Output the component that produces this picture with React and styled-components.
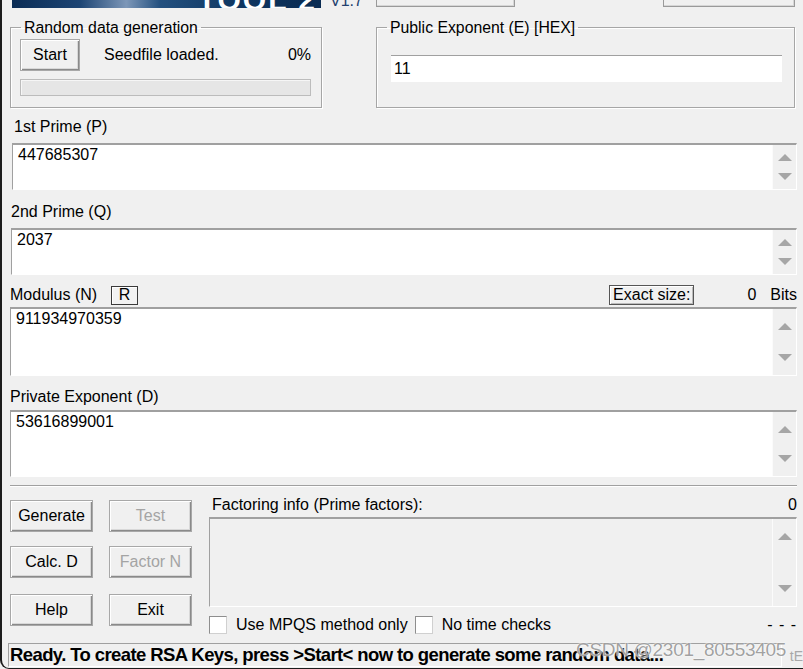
import React from 'react';
import styled, { createGlobalStyle } from 'styled-components';

const GlobalStyle = createGlobalStyle`
  html, body { margin: 0; padding: 0; background: #f0f0f0; }
  * { box-sizing: border-box; }
`;

const Window = styled.div`
  position: relative;
  width: 803px; height: 669px; overflow: hidden;
  background: #f0f0f0;
  border-left: 2px solid #1c1c1c;
  border-bottom: 1px solid #1c1c1c;
  border-bottom-left-radius: 9px;
  font-family: "Liberation Sans", Arial, sans-serif;
  font-size: 16px; color: #000;
  display: flex; flex-direction: column;
`;

const TopStrip = styled.div`
  height: 8px; display: flex; align-items: flex-end; overflow: hidden;
`;

const Banner = styled.div`
  margin-left: 10px; width: 309px; height: 8px; overflow: hidden;
  display: flex; justify-content: flex-end; align-items: flex-end;
  padding-right: 4px;
  background: linear-gradient(90deg, #0b2c55 0%, #1d4574 22%, #7d97b8 37%, #23507f 48%, #0e355f 75%, #0a2b52 100%);
`;

const BannerTitle = styled.span`
  font: bold 30px/24px "Liberation Sans", Arial, sans-serif;
  color: #fff; letter-spacing: 2px; margin-bottom: -4px;
`;

const Version = styled.span`
  margin-left: 9px; font-size: 16px; line-height: 16px; color: #23416e; margin-bottom: -1px;
`;

const TopButton = styled.div`
  height: 7px; width: ${p => p.w}px; margin-left: ${p => p.ml}px; align-self: flex-start;
  border: 1px solid #9a9a9a; border-top: none;
  box-shadow: inset -1px -1px #d6d6d6;
`;

const GroupRow = styled.div`
  display: flex; margin-top: 11px; padding-left: 8px;
`;

const Group = styled.fieldset`
  margin: 0 0 0 ${p => p.ml || 0}px; padding: 0;
  width: ${p => p.w}px; height: 89px;
  border: 1px solid #a6a6a6;
  box-shadow: inset 1px 1px #fff, 1px 1px #fff;
  min-width: 0;
  legend {
    margin-left: 10px; padding: 0 3px; line-height: 17px; font-size: 15.8px;
  }
`;

const GroupBody = styled.div`
  padding-left: ${p => p.pl}px; padding-right: 10px;
`;

const StartRow = styled.div`
  display: flex; align-items: center; margin-top: 3px;
`;

const WinButton = styled.div`
  width: ${p => p.w || 83}px; height: ${p => p.h || 32}px;
  display: flex; align-items: center; justify-content: center;
  background: #f0f0f0;
  border: 1px solid #a8a8a8;
  box-shadow: inset 1px 1px #fff, inset -1px -1px #8a8a8a, inset -2px -2px #d8d8d8;
  color: ${p => (p.disabled ? '#a4a4a4' : '#000')};
  font-size: 16px;
`;

const Status = styled.span`
  margin-left: ${p => p.ml || 0}px;
  ${p => p.grow && 'flex: 1;'}
`;

const Progress = styled.div`
  margin-top: 8px; width: 291px; height: 17px;
  border: 1px solid #bcbcbc; background: #e6e6e6;
  box-shadow: inset 1px 1px #f6f6f6;
`;

const HexInput = styled.div`
  margin-top: 19px; width: 391px; height: 27px;
  background: #fff; border-top: 1px solid #a0a0a0;
  padding: 4px 3px 0; font-size: 16px; line-height: 18px; color: #000;
`;

const Field = styled.div`
  margin-top: ${p => p.mt}px; padding-left: ${p => p.pl}px; padding-right: 6px;
`;

const FieldHead = styled.div`
  display: flex; align-items: center; height: 18px; margin-bottom: ${p => p.mb || 7}px;
  padding-left: ${p => p.lpl || 0}px;
`;

const Label = styled.span`
  line-height: 18px; font-size: 16px;
`;

const SmallButton = styled.div`
  margin-left: 14px; width: 27px; height: 19px;
  display: flex; align-items: center; justify-content: center;
  border: 1px solid #3a3a3a; box-shadow: inset 1px 1px #fff; background: #f2f2f2;
`;

const ExactBox = styled.div`
  margin-left: auto; height: 20px; padding: 0 3px;
  display: flex; align-items: center;
  border: 1px solid #555; box-shadow: inset 1px 1px #fff, inset -1px -1px #bbb;
`;

const Bits = styled.span`
  margin-left: ${p => p.ml}px;
`;

const TextBox = styled.div`
  display: flex; height: ${p => p.h}px;
  background: ${p => (p.disabled ? '#f0f0f0' : '#fff')};
  border-top: 2px solid #a0a0a0; border-left: 1px solid #a0a0a0;
  border-right: 1px solid #fff; border-bottom: 1px solid #fff;
`;

const TextContent = styled.div`
  flex: 1; padding: 1px 5px; font-size: 16px; line-height: 18px;
`;

const ScrollBar = styled.div`
  width: 24px; background: #f0f0f0;
  border-left: 1px solid #fbfbfb;
  display: flex; flex-direction: column; justify-content: space-between; align-items: center;
  padding: ${p => p.pad || 9}px 0;
`;

const Arrow = styled.span`
  width: 0; height: 0;
  border-left: 7px solid transparent; border-right: 7px solid transparent;
  ${p => (p.down ? 'border-top: 7px solid #a6a6a6;' : 'border-bottom: 7px solid #a6a6a6;')}
`;

const Separator = styled.div`
  margin: 8px 6px 0 8px; height: 2px;
  border-top: 1px solid #a0a0a0; border-bottom: 1px solid #fff;
`;

const Bottom = styled.div`
  display: flex; margin-top: 13px; padding-left: 8px; padding-right: 6px;
`;

const ButtonGrid = styled.div`
  display: grid; grid-template-columns: 83px 83px; column-gap: 16px; row-gap: 14px;
  align-content: start;
  & > :nth-child(n + 5) { margin-top: 2px; }
`;

const FactorPanel = styled.div`
  flex: 1; margin-left: 17px; margin-top: -4px; display: flex; flex-direction: column;
`;

const FactorHead = styled.div`
  height: 21px; display: flex; justify-content: space-between; padding: 0 0 0 3px; line-height: 18px;
`;

const CheckRow = styled.div`
  display: flex; align-items: center; margin-top: 9px; height: 18px;
`;

const CheckBox = styled.span`
  width: 18px; height: 18px; background: #fff;
  border: 1px solid #8e8e8e; border-right-color: #d0d0d0; border-bottom-color: #d0d0d0;
  margin-left: ${p => p.ml || 0}px; margin-right: 9px;
`;

const Dashes = styled.span`
  margin-left: auto; letter-spacing: 1px;
`;

const StatusBar = styled.div`
  margin: 9px 0 0 6px; width: 774px; height: 24px;
  border-top: 1px solid #a0a0a0; border-left: 1px solid #a0a0a0; border-right: 1px solid #fff; border-bottom: 1px solid #fff;
  display: flex; align-items: center; padding-left: 1px;
  font-weight: bold; font-size: 18.5px; letter-spacing: -0.6px; white-space: nowrap; overflow: hidden;
`;

const Clip = styled.span`
  position: absolute; right: 0; bottom: 4px; font-size: 14px; color: #a8a8a8;
`;

const Watermark = styled.span`
  position: absolute; left: 574px; top: 639px;
  font-size: 19px; color: rgba(120, 120, 120, 0.7);
  text-shadow: 0 0 2px #fff, 0 0 1px #fff;
  letter-spacing: -0.3px;
`;

const ScrollField = ({ h, pad, disabled, children }) => (
  <TextBox h={h} disabled={disabled}>
    <TextContent>{children}</TextContent>
    <ScrollBar pad={pad}>
      <Arrow />
      <Arrow down />
    </ScrollBar>
  </TextBox>
);

export default function App() {
  return (
    <Window>
      <GlobalStyle />
      <TopStrip>
        <Banner><BannerTitle>TOOL 2</BannerTitle></Banner>
        <Version>V1.7</Version>
        <TopButton w={139} ml={13} />
        <TopButton w={132} ml={148} />
      </TopStrip>

      <GroupRow>
        <Group w={312}>
          <legend>Random data generation</legend>
          <GroupBody pl={9}>
            <StartRow>
              <WinButton w={60} h={32}>Start</WinButton>
              <Status ml={24} grow>Seedfile loaded.</Status>
              <Status>0%</Status>
            </StartRow>
            <Progress />
          </GroupBody>
        </Group>
        <Group w={419} ml={54}>
          <legend>Public Exponent (E) [HEX]</legend>
          <GroupBody pl={14}>
            <HexInput>11</HexInput>
          </GroupBody>
        </Group>
      </GroupRow>

      <Field mt={10} pl={10}>
        <FieldHead lpl={2}><Label>1st Prime (P)</Label></FieldHead>
        <ScrollField h={47}>447685307</ScrollField>
      </Field>

      <Field mt={13} pl={9}>
        <FieldHead><Label>2nd Prime (Q)</Label></FieldHead>
        <ScrollField h={47}>2037</ScrollField>
      </Field>

      <Field mt={11} pl={8}>
        <FieldHead mb={3}>
          <Label>Modulus (N)</Label>
          <SmallButton>R</SmallButton>
          <ExactBox>Exact size:</ExactBox>
          <Bits ml={53}>0</Bits>
          <Bits ml={14}>Bits</Bits>
        </FieldHead>
        <ScrollField h={69} pad={14}>911934970359</ScrollField>
      </Field>

      <Field mt={12} pl={8}>
        <FieldHead mb={4}><Label>Private Exponent (D)</Label></FieldHead>
        <ScrollField h={67} pad={14}>53616899001</ScrollField>
      </Field>

      <Separator />

      <Bottom>
        <ButtonGrid>
          <WinButton>Generate</WinButton>
          <WinButton disabled>Test</WinButton>
          <WinButton>Calc. D</WinButton>
          <WinButton disabled>Factor N</WinButton>
          <WinButton>Help</WinButton>
          <WinButton>Exit</WinButton>
        </ButtonGrid>
        <FactorPanel>
          <FactorHead>
            <span>Factoring info (Prime factors):</span>
            <span>0</span>
          </FactorHead>
          <ScrollField h={90} pad={14} disabled />
          <CheckRow>
            <CheckBox />
            <span>Use MPQS method only</span>
            <CheckBox ml={7} />
            <span>No time checks</span>
            <Dashes>- - -</Dashes>
          </CheckRow>
        </FactorPanel>
      </Bottom>

      <StatusBar>Ready. To create RSA Keys, press &gt;Start&lt; now to generate some random data...</StatusBar>
      <Clip>tE</Clip>
      <Watermark>CSDN @2301_80553405</Watermark>
    </Window>
  );
}
